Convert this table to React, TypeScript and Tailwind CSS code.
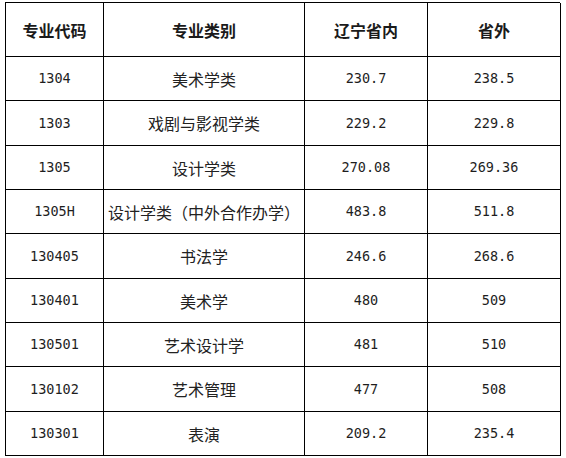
const rows = [
  { code: "1304", name: "美术学类", inside: "230.7", outside: "238.5" },
  { code: "1303", name: "戏剧与影视学类", inside: "229.2", outside: "229.8" },
  { code: "1305", name: "设计学类", inside: "270.08", outside: "269.36" },
  { code: "1305H", name: "设计学类（中外合作办学）", inside: "483.8", outside: "511.8" },
  { code: "130405", name: "书法学", inside: "246.6", outside: "268.6" },
  { code: "130401", name: "美术学", inside: "480", outside: "509" },
  { code: "130501", name: "艺术设计学", inside: "481", outside: "510" },
  { code: "130102", name: "艺术管理", inside: "477", outside: "508" },
  { code: "130301", name: "表演", inside: "209.2", outside: "235.4" },
];

const cjk = "font-['Noto_Sans_CJK_SC',sans-serif]";
const mono = "font-['DejaVu_Sans_Mono',monospace] text-[13.5px] text-[#1e1e1e]";
const cell = "flex items-center justify-center border-r border-b border-black";

export default function App() {
  return (
    <div className="w-[566px] h-[458px] bg-white pl-[5px] pt-[2px]">
      <div className="grid w-[555px] grid-cols-[98px_201px_123px_133px] border-l border-t border-black text-[#1a1a1a]">
        {/* Header */}
        {["专业代码", "专业类别", "辽宁省内", "省外"].map((h) => (
          <div key={h} className={`${cell} h-[54px] ${cjk} text-[16px] font-bold`}>
            {h}
          </div>
        ))}

        {rows.map((r, i) => (
          <div key={r.code} className="contents">
            <div className={`${cell} ${i % 3 === 1 ? "h-[45px]" : "h-[44px]"} ${mono}`}>
              {r.code}
            </div>
            <div className={`${cell} ${cjk} text-[16px] text-[#222]`}>{r.name}</div>
            <div className={`${cell} ${mono}`}>{r.inside}</div>
            <div className={`${cell} ${mono}`}>{r.outside}</div>
          </div>
        ))}
      </div>
    </div>
  );
}
